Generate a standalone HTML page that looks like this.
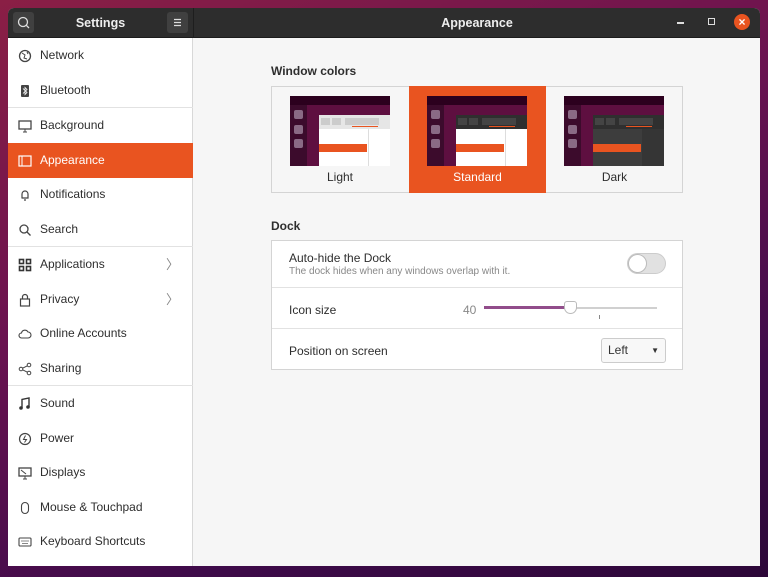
<!DOCTYPE html>
<html><head><meta charset="utf-8"><style>
*{margin:0;padding:0;box-sizing:border-box}
body{width:768px;height:577px;overflow:hidden;font-family:"Liberation Sans",sans-serif;background:linear-gradient(160deg,#8a1f45 0%,#6a1250 40%,#3f0b4a 75%,#2c0738 100%);position:relative}
.win{position:absolute;left:8px;top:8px;width:752px;height:558px;background:#f6f6f6;border-radius:6px 6px 0 0;overflow:hidden}
.hdr{position:absolute;left:0;top:0;width:752px;height:30px;background:#2d2d2d;border-bottom:1px solid #1c1c1c}
.btn{position:absolute;top:4px;width:21px;height:21px;background:#404040;border-radius:3px}
.side{position:absolute;left:0;top:30px;width:185px;height:528px;background:#fff;border-right:1px solid #d8d8d8}
.row{position:absolute;left:0;width:185px;height:35px;font-size:12px;color:#2e2e2e;line-height:35px;padding-left:32px}
.row svg{position:absolute;left:10px;top:11px}
.sel{background:#e95420;color:#fff}
.sep{position:absolute;left:0;width:185px;height:1px;background:#e2e2e2}
.chev{position:absolute;right:14px;top:0;color:#888;font-size:13px}
.t{position:absolute;font-size:12px;color:#2e2e2e}
.b{font-weight:bold}
</style></head><body>
<div class="win">
 <div class="hdr">
  <div class="btn" style="left:5px"><svg width="21" height="21"><circle cx="10" cy="10" r="4.5" fill="none" stroke="#ddd" stroke-width="1.3"/><line x1="13.3" y1="13.3" x2="16" y2="16" stroke="#ddd" stroke-width="1.3"/></svg></div>
  <div style="position:absolute;left:0;width:185px;top:0;line-height:30px;text-align:center;color:#eee;font-weight:bold;font-size:12.5px">Settings</div>
  <div class="btn" style="left:159px"><svg width="21" height="21"><path d="M7 7.5h7M7 10.5h7M7 13.5h7" stroke="#ddd" stroke-width="1.2"/></svg></div>
  <div style="position:absolute;left:185px;top:0;width:1px;height:30px;background:#1e1e1e"></div>
  <div style="position:absolute;left:186px;right:0;top:0;line-height:30px;text-align:center;color:#eee;font-weight:bold;font-size:12.5px">Appearance</div>
  <div style="position:absolute;left:669px;top:14px;width:7px;height:1.5px;background:#ddd"></div>
  <div style="position:absolute;left:700px;top:10px;width:7px;height:7px;border:1.5px solid #ddd"></div>
  <div style="position:absolute;left:726px;top:6px;width:16px;height:16px;border-radius:50%;background:#e95420;color:#fff;font-size:12px;line-height:16px;text-align:center;font-weight:bold">×</div>
 </div>
 <div class="side">
  <div class="row" style="top:0"><svg width="14" height="14"><circle cx="7" cy="7" r="5.5" fill="none" stroke="#444" stroke-width="1.3"/><path d="M4 4l3 2-1 3 3 1M9 3l1 2" stroke="#444" fill="none"/></svg>Network</div>
  <div class="row" style="top:35px"><svg width="14" height="14"><rect x="3" y="1" width="8" height="12" rx="1" fill="#444"/><path d="M5 4.5l4 4-2 2v-7l2 2-4 4" stroke="#fff" fill="none" stroke-width=".8"/></svg>Bluetooth</div>
  <div class="sep" style="top:69px"></div>
  <div class="row" style="top:70px"><svg width="14" height="14"><rect x="1" y="2" width="12" height="8" fill="none" stroke="#444" stroke-width="1.3"/><path d="M5 13h4M7 10v3" stroke="#444"/></svg>Background</div>
  <div class="row sel" style="top:105px"><svg width="14" height="14"><rect x="1" y="2" width="12" height="10" fill="none" stroke="#fff" stroke-width="1.2"/><path d="M4 2v10" stroke="#fff"/></svg>Appearance</div>
  <div class="row" style="top:139px"><svg width="14" height="14"><path d="M4 10V6a3 3 0 016 0v4H3.5h7M6 12h2" stroke="#444" fill="none" stroke-width="1.2"/></svg>Notifications</div>
  <div class="row" style="top:174px"><svg width="14" height="14"><circle cx="6" cy="6" r="4" fill="none" stroke="#444" stroke-width="1.3"/><path d="M9 9l3.5 3.5" stroke="#444" stroke-width="1.3"/></svg>Search</div>
  <div class="sep" style="top:208px"></div>
  <div class="row" style="top:209px"><svg width="14" height="14"><g fill="none" stroke="#333" stroke-width="1.6"><rect x="1.5" y="1.5" width="4" height="4"/><rect x="8.5" y="1.5" width="4" height="4"/><rect x="1.5" y="8.5" width="4" height="4"/><rect x="8.5" y="8.5" width="4" height="4"/></g></svg>Applications<span class="chev">〉</span></div>
  <div class="row" style="top:244px"><svg width="14" height="14"><rect x="2.5" y="6" width="9" height="7" fill="none" stroke="#444" stroke-width="1.2"/><path d="M4.5 6V4a2.5 2.5 0 015 0v2" fill="none" stroke="#444" stroke-width="1.2"/></svg>Privacy<span class="chev">〉</span></div>
  <div class="row" style="top:278px"><svg width="14" height="14"><path d="M3.5 11a2.5 2.5 0 010-5 3.5 3.5 0 016.5-1 3 3 0 010 6z" fill="none" stroke="#444" stroke-width="1.1"/></svg>Online Accounts</div>
  <div class="row" style="top:313px"><svg width="14" height="14"><g fill="none" stroke="#444"><circle cx="3" cy="7" r="1.8"/><circle cx="11" cy="3" r="1.8"/><circle cx="11" cy="11" r="1.8"/><path d="M4.6 6.2l4.8-2.4M4.6 7.8l4.8 2.4"/></g></svg>Sharing</div>
  <div class="sep" style="top:347px"></div>
  <div class="row" style="top:348px"><svg width="14" height="14"><path d="M4 11V2.5l7-1.5V10" fill="none" stroke="#333" stroke-width="1.4"/><circle cx="3" cy="11" r="1.8" fill="#333"/><circle cx="10" cy="10" r="1.8" fill="#333"/></svg>Sound</div>
  <div class="row" style="top:383px"><svg width="14" height="14"><circle cx="7" cy="7" r="5.5" fill="none" stroke="#444" stroke-width="1.2"/><path d="M7.5 3.5L5.5 7.5h3l-2 3" stroke="#444" fill="none"/></svg>Power</div>
  <div class="row" style="top:417px"><svg width="14" height="14"><rect x="1" y="2" width="12" height="8" fill="none" stroke="#444" stroke-width="1.3"/><path d="M5 13h4M7 10v3M3 4l5 4" stroke="#444"/></svg>Displays</div>
  <div class="row" style="top:452px"><svg width="14" height="14"><rect x="3.5" y="1.5" width="7" height="11" rx="3.5" fill="none" stroke="#444" stroke-width="1.1"/></svg>Mouse &amp; Touchpad</div>
  <div class="row" style="top:486px"><svg width="14" height="14"><rect x="1" y="3" width="12" height="8" rx="1" fill="none" stroke="#444" stroke-width="1.1"/><path d="M3 6h8M4 8.5h6" stroke="#888"/></svg>Keyboard Shortcuts</div>
 </div>

 <div class="t b" style="left:263px;top:56px">Window colors</div>
 <div style="position:absolute;left:263px;top:78px;width:412px;height:107px;border:1px solid #d4d4d4;background:#f6f6f6"></div>
 <div style="position:absolute;left:401px;top:78px;width:137px;height:107px;background:#e95420"></div>
 <!-- thumbnails -->
 <svg style="position:absolute;left:282px;top:88px" width="100" height="70"><rect width="100" height="70" fill="#5e0f40"/><rect width="100" height="9" fill="#2c001e"/><rect y="9" width="17" height="61" fill="#3c0b2c"/><rect x="4" y="14" width="9" height="9" rx="2" fill="#8a6a85"/><rect x="4" y="29" width="9" height="9" rx="2" fill="#8a6a85"/><rect x="4" y="43" width="9" height="9" rx="2" fill="#8a6a85"/><rect x="29" y="19" width="71" height="51" fill="#fff"/><rect x="29" y="19" width="71" height="14" fill="#e6e6e6"/><rect x="31" y="22" width="9" height="7" fill="#ccc"/><rect x="42" y="22" width="9" height="7" fill="#ccc"/><rect x="55" y="22" width="34" height="7" fill="#ccc"/><rect x="62" y="30" width="26" height="1" fill="#e95420"/><rect x="29" y="48" width="48" height="8" fill="#e95420"/><rect x="78" y="33" width="1" height="37" fill="#ddd"/></svg>
 <svg style="position:absolute;left:419px;top:88px" width="100" height="70"><rect width="100" height="70" fill="#5e0f40"/><rect width="100" height="9" fill="#2c001e"/><rect y="9" width="17" height="61" fill="#3c0b2c"/><rect x="4" y="14" width="9" height="9" rx="2" fill="#8a6a85"/><rect x="4" y="29" width="9" height="9" rx="2" fill="#8a6a85"/><rect x="4" y="43" width="9" height="9" rx="2" fill="#8a6a85"/><rect x="29" y="19" width="71" height="51" fill="#fff"/><rect x="29" y="19" width="71" height="14" fill="#2f2f2f"/><rect x="31" y="22" width="9" height="7" fill="#444"/><rect x="42" y="22" width="9" height="7" fill="#444"/><rect x="55" y="22" width="34" height="7" fill="#444"/><rect x="62" y="30" width="26" height="1" fill="#e95420"/><rect x="29" y="48" width="48" height="8" fill="#e95420"/><rect x="78" y="33" width="1" height="37" fill="#ddd"/></svg>
 <svg style="position:absolute;left:556px;top:88px" width="100" height="70"><rect width="100" height="70" fill="#5e0f40"/><rect width="100" height="9" fill="#2c001e"/><rect y="9" width="17" height="61" fill="#3c0b2c"/><rect x="4" y="14" width="9" height="9" rx="2" fill="#8a6a85"/><rect x="4" y="29" width="9" height="9" rx="2" fill="#8a6a85"/><rect x="4" y="43" width="9" height="9" rx="2" fill="#8a6a85"/><rect x="29" y="19" width="71" height="51" fill="#3d3d3d"/><rect x="29" y="19" width="71" height="14" fill="#2f2f2f"/><rect x="31" y="22" width="9" height="7" fill="#444"/><rect x="42" y="22" width="9" height="7" fill="#444"/><rect x="55" y="22" width="34" height="7" fill="#444"/><rect x="62" y="30" width="26" height="1" fill="#e95420"/><rect x="29" y="48" width="48" height="8" fill="#e95420"/><rect x="78" y="33" width="22" height="37" fill="#353535"/></svg>
 <div class="t" style="left:263px;width:138px;top:162px;text-align:center">Light</div>
 <div class="t" style="left:401px;width:137px;top:162px;text-align:center;color:#fff">Standard</div>
 <div class="t" style="left:538px;width:137px;top:162px;text-align:center">Dark</div>

 <div class="t b" style="left:263px;top:211px">Dock</div>
 <div style="position:absolute;left:263px;top:232px;width:412px;height:130px;border:1px solid #d4d4d4;background:#fff">
  <div class="t" style="left:17px;top:10px;font-size:12px">Auto-hide the Dock</div>
  <div class="t" style="left:17px;top:25px;font-size:10px;color:#888">The dock hides when any windows overlap with it.</div>
  <div style="position:absolute;left:355px;top:12px;width:39px;height:21px;border-radius:11px;background:#e1e1e1;border:1px solid #ccc"><div style="position:absolute;left:0;top:0;width:19px;height:19px;border-radius:50%;background:#fff;border:1px solid #bbb"></div></div>
  <div style="position:absolute;left:0;top:46px;width:410px;height:1px;background:#e2e2e2"></div>
  <div class="t" style="left:17px;top:62px">Icon size</div>
  <div class="t" style="left:191px;top:62px;color:#888">40</div>
  <div style="position:absolute;left:212px;top:66px;width:173px;height:2px;background:#d0d0d0"></div>
  <div style="position:absolute;left:212px;top:65px;width:86px;height:3px;background:#924d8b"></div>
  <div style="position:absolute;left:292px;top:60px;width:13px;height:13px;background:#fff;border:1px solid #bbb;border-radius:3px 3px 50% 50%"></div>
  <div style="position:absolute;left:327px;top:74px;width:1px;height:4px;background:#888"></div>
  <div style="position:absolute;left:0;top:87px;width:410px;height:1px;background:#e2e2e2"></div>
  <div class="t" style="left:17px;top:103px">Position on screen</div>
  <div style="position:absolute;left:329px;top:97px;width:65px;height:25px;border:1px solid #ccc;border-radius:3px;background:#f8f8f8;font-size:12px;color:#333;line-height:23px;padding-left:6px">Left<span style="position:absolute;right:6px;top:0;font-size:8px">▼</span></div>
 </div>
</div>
</body></html>
